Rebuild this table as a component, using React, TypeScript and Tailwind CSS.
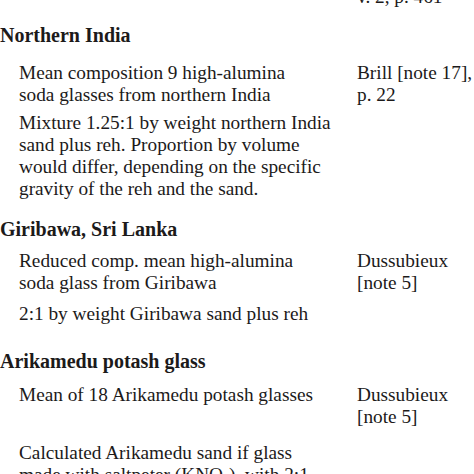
const serif = { fontFamily: '"Liberation Serif", "Times New Roman", serif' };

type Row = { desc: React.ReactNode[]; ref?: string[]; gap: string };

function Heading({ children, gap }: { children: React.ReactNode; gap: string }) {
  return (
    <h3 className={`${gap} text-[20px] leading-[22px] font-bold text-[#1c1a1a]`}>{children}</h3>
  );
}

function Entry({ desc, ref, gap }: Row) {
  return (
    <div className={`${gap} flex text-[19.3px] leading-[22px] text-[#1c1a1a]`}>
      <div className="w-[357px] shrink-0 pl-[19px]">
        {desc.map((line, i) => (
          <div key={i} className="whitespace-nowrap">
            {line}
          </div>
        ))}
      </div>
      <div className="flex-1">
        {(ref ?? []).map((line, i) => (
          <div key={i} className="whitespace-nowrap">
            {line}
          </div>
        ))}
      </div>
    </div>
  );
}

export default function App() {
  return (
    <div className="h-[474px] w-[474px] overflow-hidden bg-white" style={serif}>
      <div className="-mt-[14px]">
        <Entry gap="" desc={['']} ref={['v. 2, p. 461']} />

        <Heading gap="mt-[16px]">Northern India</Heading>
        <Entry
          gap="mt-[16px]"
          desc={['Mean composition 9 high-alumina', 'soda glasses from northern India']}
          ref={['Brill [note 17],', 'p. 22']}
        />
        <Entry
          gap="mt-[6px]"
          desc={[
            'Mixture 1.25:1 by weight northern India',
            'sand plus reh. Proportion by volume',
            'would differ, depending on the specific',
            'gravity of the reh and the sand.',
          ]}
        />

        <Heading gap="mt-[18px]">Giribawa, Sri Lanka</Heading>
        <Entry
          gap="mt-[10px]"
          desc={['Reduced comp. mean high-alumina', 'soda glass from Giribawa']}
          ref={['Dussubieux', '[note 5]']}
        />
        <Entry gap="mt-[9px]" desc={['2:1 by weight Giribawa sand plus reh']} />

        <Heading gap="mt-[25px]">Arikamedu potash glass</Heading>
        <Entry
          gap="mt-[12px]"
          desc={['Mean of 18 Arikamedu potash glasses']}
          ref={['Dussubieux', '[note 5]']}
        />
        <Entry
          gap="mt-[14px]"
          desc={[
            'Calculated Arikamedu sand if glass',
            <>
              made with saltpeter (KNO<sub className="text-[12px] leading-none">3</sub>), with 2:1
            </>,
            'ratio of sand to saltpeter',
          ]}
        />
      </div>
    </div>
  );
}
